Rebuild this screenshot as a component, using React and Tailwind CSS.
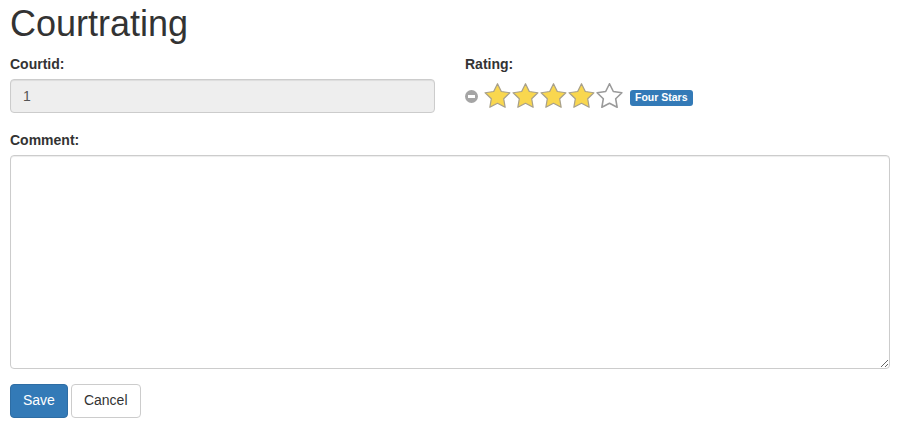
import React, { useState } from 'react';

const STAR_POINTS = '12,2 15.09,8.26 22,9.27 17,14.14 18.18,21.02 12,17.77 5.82,21.02 7,14.14 2,9.27 8.91,8.26';
const TITLES = ['One Star', 'Two Stars', 'Three Stars', 'Four Stars', 'Five Stars'];

const Star = ({ filled }) => (
    <svg width="27" height="25" viewBox="1.4 1.4 21.2 20.2" className="block">
        <polygon
            points={STAR_POINTS}
            fill={filled ? '#f9d74f' : '#ffffff'}
            stroke={filled ? '#a8a08a' : '#9a9a9a'}
            strokeWidth={filled ? 1 : 1.3}
            strokeLinejoin="round"
        />
    </svg>
);

const App = () => {
    const [rating, setRating] = useState(4);

    return (
        <div className="px-[10px] font-['Liberation_Sans',Arial,sans-serif] text-[14px] text-[#333] bg-white min-h-[428px]">
            <h1 className="text-[36px] leading-[1.1] font-normal pt-[4px] mb-[10px]">Courtrating</h1>

            {/* Top row */}
            <div className="grid grid-cols-2 gap-x-[30px] mb-[17px]">
                <div>
                    <label className="block font-bold leading-[20px] mb-[5px]">Courtid:</label>
                    <input
                        disabled
                        value="1"
                        readOnly
                        className="block w-full h-[34px] px-[12px] py-[6px] bg-[#eee] border border-[#ccc] rounded-[4px] text-[#555] text-[14px] shadow-[inset_0_1px_1px_rgba(0,0,0,0.075)]"
                    />
                </div>
                <div>
                    <label className="block font-bold leading-[20px] mb-[5px]">Rating:</label>
                    <div className="flex items-center h-[34px]">
                        <button
                            onClick={() => setRating(0)}
                            className="w-[13px] h-[13px] rounded-full bg-[#a5a5a5] flex items-center justify-center mr-[6px] mt-[2px]"
                        >
                            <span className="block w-[7px] h-[3px] bg-white"></span>
                        </button>
                        <div className="flex gap-[1px]">
                            {[1, 2, 3, 4, 5].map((n) => (
                                <span key={n} onClick={() => setRating(n)} className="cursor-pointer">
                                    <Star filled={n <= rating} />
                                </span>
                            ))}
                        </div>
                        {rating > 0 && (
                            <span className="ml-[7px] mt-[4px] h-[16px] flex items-center bg-[#337ab7] text-white font-bold text-[10.5px] leading-none px-[5px] rounded-[3px]">
                                {TITLES[rating - 1]}
                            </span>
                        )}
                    </div>
                </div>
            </div>

            {/* Comment */}
            <div className="mb-[15px]">
                <label className="block font-bold leading-[20px] mb-[5px]">Comment:</label>
                <textarea className="block w-full h-[214px] px-[12px] py-[6px] border border-[#ccc] rounded-[4px] text-[#555] text-[14px] shadow-[inset_0_1px_1px_rgba(0,0,0,0.075)]"></textarea>
            </div>

            <div className="flex gap-[3px]">
                <button className="h-[34px] px-[12px] bg-[#337ab7] border border-[#2e6da4] rounded-[4px] text-white text-[14px]">Save</button>
                <button className="h-[34px] px-[12px] bg-white border border-[#ccc] rounded-[4px] text-[#333] text-[14px]">Cancel</button>
            </div>
        </div>
    );
};

export default App;
